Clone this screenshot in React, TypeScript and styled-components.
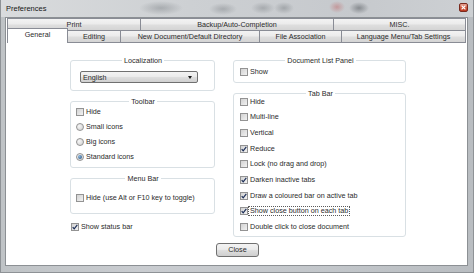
import React from "react";
import styled, { createGlobalStyle } from "styled-components";

const Global = createGlobalStyle`
  html, body { margin: 0; padding: 0; background: #c6cacd; }
  body { overflow: hidden; }
  * { box-sizing: border-box; }
`;

const Window = styled.div`
  width: 474px;
  height: 273px;
  display: flex;
  flex-direction: column;
  padding: 0 5px 6px 4px;
  border: 1px solid #8e9296;
  border-top: none;
  background: linear-gradient(to right, #bfc3c6, #c9ccd0 30%, #c2c6ca 70%, #b9bdc1);
  font-family: "Liberation Sans", Arial, sans-serif;
  font-size: 7.2px;
  color: #2a2a2a;
`;

const TitleBar = styled.div`
  height: 17px;
  flex: none;
  display: flex;
  align-items: center;
  justify-content: space-between;
  font-size: 7.5px;
  color: #161616;
  margin: 0 -5px 0 -4px;
  padding: 0 5px 0 5px;
  background:
    radial-gradient(ellipse 22px 7px at 160px 8px, rgba(110, 115, 120, 0.4), transparent),
    radial-gradient(ellipse 14px 6px at 222px 9px, rgba(100, 105, 110, 0.35), transparent),
    radial-gradient(ellipse 12px 6px at 262px 8px, rgba(100, 105, 110, 0.35), transparent),
    radial-gradient(ellipse 10px 6px at 283px 8px, rgba(90, 95, 100, 0.35), transparent),
    radial-gradient(ellipse 8px 6px at 336px 7px, rgba(190, 80, 80, 0.4), transparent),
    radial-gradient(ellipse 10px 6px at 358px 8px, rgba(60, 65, 70, 0.45), transparent),
    linear-gradient(to right, #d9dbdd, #cdd0d3 40%, #c6c9cd 75%, #cdd0d3);
`;

const CloseX = styled.span`
  align-self: flex-start;
  margin-top: 3px;
  width: 9px;
  height: 9px;
  border: 1px solid #7a2a1e;
  border-radius: 2px;
  background: linear-gradient(#e6a394, #cf5a40 50%, #b9361d);
  display: flex;
  align-items: center;
  justify-content: center;
`;

const Client = styled.div`
  flex: 1;
  display: flex;
  flex-direction: column;
  background: #fff;
  border: 1px solid #8c9094;
  padding: 0 1px 0 1px;
`;

const TabRow = styled.div`
  display: flex;
  align-items: flex-end;
  height: 12px;
  flex: none;
`;

const Tab = styled.div<{ $w: number; $active?: boolean }>`
  width: ${(p) => p.$w}px;
  height: ${(p) => (p.$active ? 15 : 12)}px;
  margin-left: -1px;
  margin-bottom: ${(p) => (p.$active ? -1 : 0)}px;
  &:first-child { margin-left: 0; }
  border: 1px solid #898c95;
  border-bottom: none;
  background: ${(p) =>
    p.$active ? "#fff" : "linear-gradient(#f3f3f3, #ebebeb 45%, #dedede 55%, #d4d4d4)"};
  display: flex;
  justify-content: center;
  align-items: ${(p) => (p.$active ? "flex-start" : "center")};
  padding-top: ${(p) => (p.$active ? 1 : 0)}px;
  line-height: 9px;
  white-space: nowrap;
  position: ${(p) => (p.$active ? "relative" : "static")};
  z-index: ${(p) => (p.$active ? 2 : "auto")};
`;

const Panel = styled.div`
  flex: 1;
  display: flex;
  flex-direction: column;
  border-top: 1px solid #898c95;
  padding-top: 13px;
`;

const Columns = styled.div`
  display: grid;
  grid-template-columns: 145px 173px;
  column-gap: 18px;
  align-items: start;
  padding-left: 63px;
`;

const Column = styled.div`
  display: flex;
  flex-direction: column;
`;

const Group = styled.fieldset<{ $pt: number; $pb: number; $pl: number; $mt?: number }>`
  margin: ${(p) => p.$mt ?? 0}px 0 0 0;
  min-width: 0;
  border: 1px solid #d9e0e4;
  border-radius: 3px;
  padding: ${(p) => p.$pt}px 4px ${(p) => p.$pb}px ${(p) => p.$pl}px;
`;

const Legend = styled.legend`
  margin: 0 auto;
  padding: 0 2px;
  height: 9px;
  line-height: 9px;
  white-space: nowrap;
`;

const List = styled.div<{ $mt: number }>`
  display: flex;
  flex-direction: column;
  margin-top: ${(p) => p.$mt}px;
`;

const Item = styled.div<{ $h: number; $ml?: number }>`
  display: flex;
  align-items: center;
  gap: 2px;
  height: ${(p) => p.$h}px;
  margin-left: ${(p) => p.$ml ?? 0}px;
  white-space: nowrap;
`;

const Box = styled.span`
  width: 8px;
  height: 8px;
  flex: none;
  border: 1px solid #939393;
  background: linear-gradient(135deg, #d2d2d2, #f2f2f2);
  display: flex;
  align-items: center;
  justify-content: center;
`;

const Radio = styled.span<{ $on?: boolean }>`
  width: 8px;
  height: 8px;
  flex: none;
  border-radius: 50%;
  border: 1px solid #939393;
  background: radial-gradient(circle at 35% 35%, #f6f6f6, #cfcfcf);
  display: flex;
  align-items: center;
  justify-content: center;
  &::after {
    content: "";
    width: 4px;
    height: 4px;
    border-radius: 50%;
    background: ${(p) =>
      p.$on ? "radial-gradient(circle at 35% 35%, #8db8df, #1d4a78)" : "transparent"};
  }
`;

const Label = styled.span<{ $focus?: boolean }>`
  line-height: 8px;
  outline: ${(p) => (p.$focus ? "1px dotted #5a5a5a" : "none")};
  padding: 0 ${(p) => (p.$focus ? 1 : 0)}px;
  margin-left: ${(p) => (p.$focus ? -1 : 0)}px;
`;

const Combo = styled.div`
  margin-left: 4px;
  width: 118px;
  height: 12px;
  border: 1px solid #707070;
  border-radius: 2px;
  background: linear-gradient(#f3f3f3, #ebebeb 45%, #dddddd 55%, #d0d0d0);
  display: flex;
  align-items: center;
  justify-content: space-between;
  padding: 0 5px 0 2px;
`;

const Arrow = styled.span`
  width: 0;
  height: 0;
  border-left: 2.5px solid transparent;
  border-right: 2.5px solid transparent;
  border-top: 3px solid #1a1a1a;
`;

const ButtonRow = styled.div`
  display: flex;
  justify-content: center;
  padding-left: 2px;
  margin-top: 6px;
`;

const Button = styled.button`
  width: 43px;
  height: 14px;
  padding: 0;
  border: 1px solid #707070;
  border-radius: 3px;
  background: linear-gradient(#f3f3f3, #ebebeb 45%, #dddddd 55%, #cfcfcf);
  font: inherit;
  color: #2a2a2a;
  line-height: 9px;
`;

const Check = () => (
  <svg width="6" height="6" viewBox="0 0 6 6">
    <path d="M0.7 3.1 L2.2 4.8 L5.3 0.9" fill="none" stroke="#1b2d57" strokeWidth="1.2" />
  </svg>
);

const CheckItem = ({ label, checked, h, ml, focus }: { label: string; checked?: boolean; h: number; ml?: number; focus?: boolean }) => (
  <Item $h={h} $ml={ml}>
    <Box>{checked && <Check />}</Box>
    <Label $focus={focus}>{label}</Label>
  </Item>
);

const RadioItem = ({ label, on }: { label: string; on?: boolean }) => (
  <Item $h={15}>
    <Radio $on={on} />
    <Label>{label}</Label>
  </Item>
);

const row1 = [
  { label: "Print", w: 134 },
  { label: "Backup/Auto-Completion", w: 194 },
  { label: "MISC.", w: 133 },
];

const row2 = [
  { label: "General", w: 61, active: true },
  { label: "Editing", w: 54 },
  { label: "New Document/Default Directory", w: 140 },
  { label: "File Association", w: 83 },
  { label: "Language Menu/Tab Settings", w: 125 },
];

const tabBarItems: { label: string; checked?: boolean; focus?: boolean }[] = [
  { label: "Hide" },
  { label: "Multi-line" },
  { label: "Vertical" },
  { label: "Reduce", checked: true },
  { label: "Lock (no drag and drop)" },
  { label: "Darken inactive tabs", checked: true },
  { label: "Draw a coloured bar on active tab", checked: true },
  { label: "Show close button on each tab", checked: true, focus: true },
  { label: "Double click to close document" },
];

export default function App() {
  return (
    <>
      <Global />
      <Window>
        <TitleBar>
          <span>Preferences</span>
          <CloseX>
            <svg width="5" height="5" viewBox="0 0 5 5">
              <path d="M0.6 0.6 L4.4 4.4 M4.4 0.6 L0.6 4.4" stroke="#fff" strokeWidth="1.2" />
            </svg>
          </CloseX>
        </TitleBar>
        <Client>
          <TabRow>
            {row1.map((t) => (
              <Tab key={t.label} $w={t.w}>{t.label}</Tab>
            ))}
          </TabRow>
          <TabRow>
            {row2.map((t) => (
              <Tab key={t.label} $w={t.w} $active={t.active}>{t.label}</Tab>
            ))}
          </TabRow>
          <Panel>
            <Columns>
              <Column>
                <Group $pt={6} $pb={7} $pl={5}>
                  <Legend>Localization</Legend>
                  <Combo>
                    <span>English</span>
                    <Arrow />
                  </Combo>
                </Group>
                <Group $pt={0} $pb={2.5} $pl={5} $mt={6}>
                  <Legend>Toolbar</Legend>
                  <List $mt={-1.5}>
                    <CheckItem label="Hide" h={15} />
                    <RadioItem label="Small icons" />
                    <RadioItem label="Big icons" />
                    <RadioItem label="Standard icons" on />
                  </List>
                </Group>
                <Group $pt={7.5} $pb={7} $pl={5} $mt={6}>
                  <Legend>Menu Bar</Legend>
                  <CheckItem label="Hide (use Alt or F10 key to toggle)" h={15} />
                </Group>
                <List $mt={6}>
                  <CheckItem label="Show status bar" checked h={15} ml={1} />
                </List>
              </Column>
              <Column>
                <Group $pt={0} $pb={2.5} $pl={6}>
                  <Legend>Document List Panel</Legend>
                  <List $mt={-0.5}>
                    <CheckItem label="Show" h={15} />
                  </List>
                </Group>
                <Group $pt={0} $pb={1} $pl={6} $mt={6}>
                  <Legend>Tab Bar</Legend>
                  <List $mt={-4}>
                    {tabBarItems.map((it) => (
                      <CheckItem key={it.label} label={it.label} checked={it.checked} focus={it.focus} h={15.65} />
                    ))}
                  </List>
                </Group>
              </Column>
            </Columns>
            <ButtonRow>
              <Button>Close</Button>
            </ButtonRow>
          </Panel>
        </Client>
      </Window>
    </>
  );
}
